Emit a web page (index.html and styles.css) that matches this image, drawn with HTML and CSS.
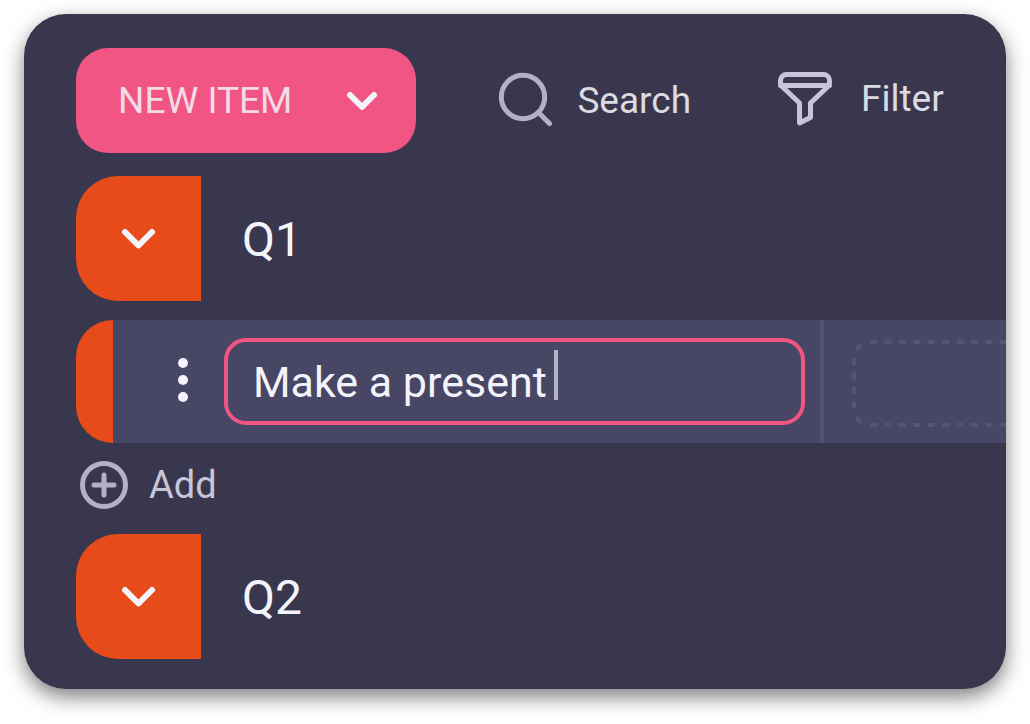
FILE: index.html
```html
<!DOCTYPE html>
<html lang="en">
<head>
<meta charset="utf-8">
<meta name="viewport" content="width=device-width, initial-scale=1">
<title>Board</title>
<link rel="stylesheet" href="styles.css">
</head>
<body>
<main class="board">
  <div class="toolbar">
    <button class="new-item" type="button">
      <span>NEW ITEM</span>
      <svg width="34" height="24" viewBox="0 0 34 24" aria-hidden="true"><path class="chevron" d="M5 6l12 12L29 6"/></svg>
    </button>
    <button class="tool tool-search" type="button">
      <svg class="tool-icon" width="56" height="56" viewBox="0 0 56 56" aria-hidden="true"><circle class="line" cx="26" cy="26" r="21.700"/><path class="line" d="M41.500 41.500L52.500 52.500"/></svg>
      <span>Search</span>
    </button>
    <button class="tool tool-filter" type="button">
      <svg width="56" height="56" viewBox="0 0 56 56" aria-hidden="true"><path class="line light" d="M9.500 3.500h37a6 6 0 0 1 6 6v2.500a5 5 0 0 1-1.500 3.500L33.500 32v14.500L22.500 52V32L5 15.500A5 5 0 0 1 3.500 12V9.500a6 6 0 0 1 6-6zM3.500 14.500h49"/></svg>
      <span>Filter</span>
    </button>
  </div>

  <section class="group">
    <div class="group-head">
      <button class="toggle" type="button" aria-label="Collapse Q1">
        <svg width="37" height="26" viewBox="0 0 37 26" aria-hidden="true"><path class="chevron" d="M5 6l13.500 13.500L32 6"/></svg>
      </button>
      <h2 class="group-title">Q1</h2>
    </div>
    <div class="item">
      <div class="item-tag"></div>
      <div class="item-name">
        <button class="menu" type="button" aria-label="Item menu">
          <svg width="12" height="46" viewBox="0 0 12 46" aria-hidden="true"><circle cx="6" cy="6" r="5"/><circle cx="6" cy="23" r="5"/><circle cx="6" cy="40" r="5"/></svg>
        </button>
        <div class="field">
          <input class="field-input" type="text" value="Make a present" aria-label="Item name">
          <span class="caret"></span>
        </div>
      </div>
      <div class="item-slot">
        <svg class="slot-outline" width="100%" height="87" aria-hidden="true">
          <path d="M18 2H2000M18 85H2000"/>
          <path d="M2 18V70"/>
          <path class="corner" d="M2 18A16 16 0 0 1 18 2"/>
          <path class="corner" d="M2 69A16 16 0 0 0 18 85"/>
        </svg>
      </div>
    </div>
    <button class="add" type="button">
      <svg width="50" height="50" viewBox="0 0 50 50" aria-hidden="true"><circle class="line" cx="25" cy="25" r="21.500"/><path class="line" d="M25 15v20M15 25h20"/></svg>
      <span>Add</span>
    </button>
  </section>

  <section class="group">
    <div class="group-head">
      <button class="toggle" type="button" aria-label="Collapse Q2">
        <svg width="37" height="26" viewBox="0 0 37 26" aria-hidden="true"><path class="chevron" d="M5 6l13.500 13.500L32 6"/></svg>
      </button>
      <h2 class="group-title">Q2</h2>
    </div>
  </section>
</main>
</body>
</html>
```
FILE: styles.css
```css
* {
  box-sizing: border-box;
}

body {
  margin: 0;
  padding: 14px 24px 35px;
  background: #fff;
  font-family: Roboto, "Liberation Sans", sans-serif;
}

button {
  margin: 0;
  padding: 0;
  border: 0;
  background: none;
  font: inherit;
  cursor: pointer;
}

svg {
  display: block;
  flex: none;
}

.board {
  display: flex;
  flex-direction: column;
  gap: 23px;
  padding: 34px 0 30px 52px;
  overflow: hidden;
  border-radius: 42px;
  background: #39374e;
  box-shadow: 0 8px 20px rgba(0, 0, 0, 0.5);
}

.toolbar {
  display: flex;
  align-items: center;
}

.new-item {
  display: flex;
  align-items: center;
  gap: 53px;
  padding: 31px 37px 30px 42px;
  border-radius: 32px;
  background: #f05584;
  color: #f3dbe6;
  font-size: 37px;
  line-height: 44px;
}

.chevron {
  fill: none;
  stroke: #f4f2fa;
  stroke-width: 6;
  stroke-linecap: round;
  stroke-linejoin: round;
}

.line {
  fill: none;
  stroke: #b4b0c8;
  stroke-width: 5;
  stroke-linecap: round;
  stroke-linejoin: round;
}

.light {
  stroke: #c8c5d9;
}

.tool {
  display: flex;
  align-items: center;
  gap: 24px;
  color: #dcdbe2;
  font-size: 37px;
  line-height: 44px;
}

.tool-search {
  margin-left: 81px;
}

.tool-icon {
  margin-bottom: 4px;
}

.tool-filter {
  gap: 28px;
  margin-left: 86px;
  padding-bottom: 4px;
}

.group {
  display: flex;
  flex-direction: column;
}

.group-head {
  display: flex;
  align-items: center;
  gap: 41px;
}

.toggle {
  display: grid;
  place-items: center;
  width: 125px;
  height: 125px;
  border-radius: 42px 0 0 42px;
  background: #e64b19;
}

.group-title {
  margin: 0;
  padding-top: 2px;
  color: #f4f2fa;
  font-size: 48px;
  font-weight: 400;
  line-height: 56px;
}

.item {
  display: flex;
  margin-top: 19px;
}

.item-tag {
  width: 37px;
  border-radius: 37px 0 0 37px;
  background: #e64b19;
}

.item-name {
  display: flex;
  flex: 1;
  align-items: center;
  gap: 35px;
  min-width: 0;
  padding: 18px 15px 18px 64px;
  border-right: 4px solid #535078;
  background: #474664;
}

.menu {
  margin-bottom: 4px;
  fill: #f4f2fa;
}

.field {
  position: relative;
  flex: 1;
  min-width: 0;
}

.field-input {
  display: block;
  width: 100%;
  height: 87px;
  padding: 0 25px;
  border: 4px solid #f05584;
  border-radius: 22px;
  outline: 0;
  background: transparent;
  color: #f4f2fa;
  font: inherit;
  font-size: 43px;
}

.caret {
  position: absolute;
  top: 12px;
  left: 330px;
  width: 4px;
  height: 50px;
  background: #b4b0c8;
}

.item-slot {
  width: 182px;
  padding: 20px 0 16px 28px;
  background: #474664;
}

.slot-outline {
  fill: none;
  stroke: #55537a;
  stroke-width: 4;
  stroke-dasharray: 7 7.450;
}

.corner {
  stroke-dasharray: 0 9 7 99;
}

.add {
  display: flex;
  align-items: center;
  align-self: flex-start;
  gap: 20px;
  margin: 17px 0 1px;
  padding-left: 3px;
  color: #c8c5d9;
  font-size: 38px;
  line-height: 44px;
}
```
